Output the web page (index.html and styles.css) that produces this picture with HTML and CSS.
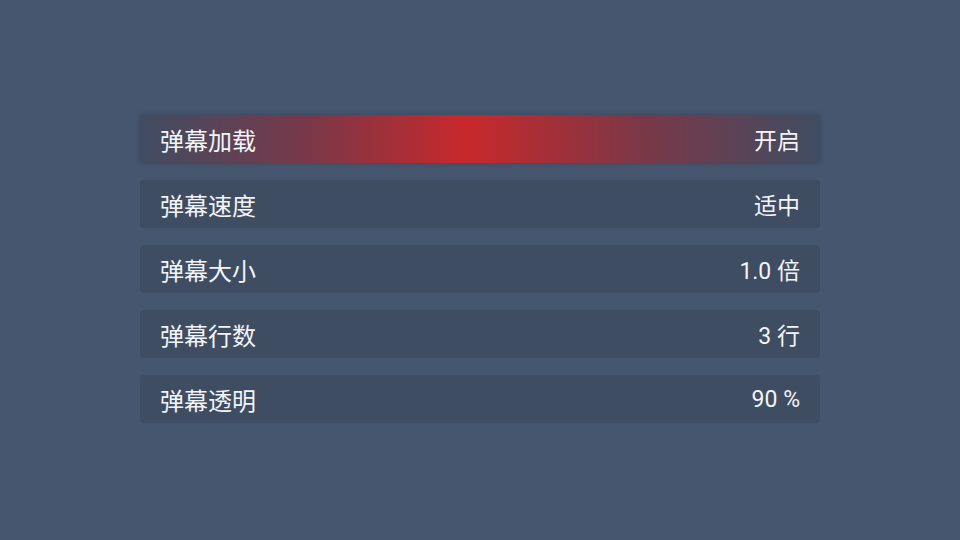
FILE: index.html
```html
<!DOCTYPE html>
<html lang="zh-CN">
<head>
    <meta charset="UTF-8">
    <meta name="viewport" content="width=device-width, initial-scale=1.0">
    <title>弹幕设置</title>
    <link rel="stylesheet" href="styles.css">
</head>
<body>
    <div class="settings">
        <div class="setting-item active">
            <span class="setting-name">弹幕加载</span>
            <span class="setting-value">开启</span>
        </div>
        <div class="setting-item">
            <span class="setting-name">弹幕速度</span>
            <span class="setting-value">适中</span>
        </div>
        <div class="setting-item">
            <span class="setting-name">弹幕大小</span>
            <span class="setting-value">1.0 倍</span>
        </div>
        <div class="setting-item">
            <span class="setting-name">弹幕行数</span>
            <span class="setting-value">3 行</span>
        </div>
        <div class="setting-item">
            <span class="setting-name">弹幕透明</span>
            <span class="setting-value">90 %</span>
        </div>
    </div>
</body>
</html>
```

FILE: styles.css
```css
html, body {
    margin: 0;
    height: 100%;
}
body {
    background-color: #46566f;
    font-family: Roboto, "Noto Sans CJK SC", sans-serif;
    color: #f2f4f7;
}
.settings {
    width: 680px;
    margin: 0 auto;
    padding-top: 115px;
    display: flex;
    flex-direction: column;
    gap: 17px;
}
.setting-item {
    height: 48px;
    display: flex;
    align-items: center;
    justify-content: space-between;
    padding: 0 20px 0 20px;
    background-color: #3f4d62;
    border-radius: 4px;
    font-size: 24px;
}
.setting-value {
    font-size: 23px;
}
.setting-item.active {
    background: linear-gradient(to right, #3f4d62 0%, #7a3848 25%, #c8282b 48%, #7a3848 74%, #3f4d62 100%);
    box-shadow: 0 0 4px rgba(40, 50, 65, 0.5);
}
```
